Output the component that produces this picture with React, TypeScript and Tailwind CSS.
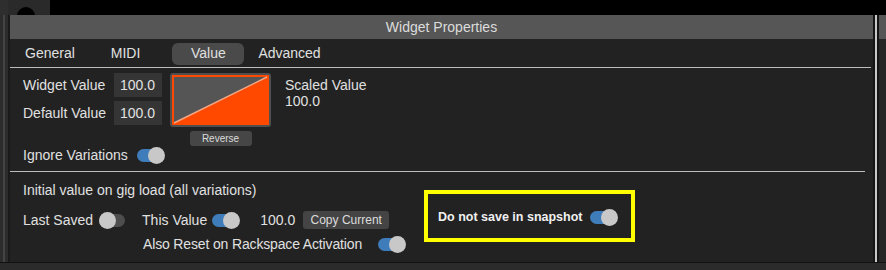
function Toggle({ on }: { on: boolean }) {
  return (
    <div className="relative w-[28px] h-[17px] flex items-center shrink-0">
      <div className={`w-[26px] h-[13px] rounded-full ${on ? 'bg-[#3f7dba]' : 'bg-[#4e4e4e]'}`}></div>
      <div className={`absolute top-0 ${on ? 'right-0' : 'left-0'} w-[17px] h-[17px] rounded-full bg-[#c8c8c8]`}></div>
    </div>
  )
}

function Field({ value }: { value: string }) {
  return (
    <div className="w-[48px] h-[24px] bg-[#353535] flex items-center pl-[6px] text-[#e2e2e2]">{value}</div>
  )
}

export default function App() {
  return (
    <div
      className="w-[886px] h-[270px] bg-black flex flex-col overflow-hidden text-[14px] text-[#e0e0e0] whitespace-nowrap"
      style={{ fontFamily: '"Liberation Sans", Arial, sans-serif' }}
    >
      {/* top strip */}
      <div className="h-[15px] flex shrink-0">
        <div className="w-[8px] bg-[#2e2e2e]"></div>
        <div className="w-[42px] bg-[#2a2a2a] flex justify-center pt-[7px] pr-[6px]">
          <div className="w-[18px] h-[18px] rounded-full bg-black"></div>
        </div>
        <div className="flex-1 bg-black"></div>
      </div>

      {/* middle */}
      <div className="h-[247px] flex shrink-0">
        <div className="w-[10px] bg-[#2c2c2c] flex">
          <div className="w-[3px]"></div>
          <div className="w-[2px] bg-[#444]"></div>
          <div className="w-[3px]"></div>
          <div className="w-[2px] bg-[#1a1a1a]"></div>
        </div>

        {/* panel */}
        <div className="w-[863px] flex flex-col bg-[#222222]">
          <div className="h-[24px] bg-[#565656] flex items-center justify-center text-[#dcdcdc] text-[14px]">
            Widget Properties
          </div>

          {/* tabs */}
          <div className="h-[28px] flex items-center pt-[1px]">
            <span className="ml-[15px]">General</span>
            <span className="ml-[36px]">MIDI</span>
            <div className="ml-[32px] w-[72px] h-[22px] rounded-md bg-[#4a4a4a] flex items-center justify-center">Value</div>
            <span className="ml-[14px]">Advanced</span>
          </div>
          <div className="h-[1px] w-[861px] bg-[#bdbdbd]"></div>

          {/* value section */}
          <div className="h-[103px] flex pt-[5px]">
            <div className="flex flex-col ml-[13px]">
              <div className="flex gap-[4px]">
                <div className="flex flex-col gap-[4px]">
                  <div className="flex items-center h-[24px] gap-[10px]">
                    <span className="w-[81px]">Widget Value</span>
                    <Field value="100.0" />
                  </div>
                  <div className="flex items-center h-[24px] gap-[10px]">
                    <span className="w-[81px]">Default Value</span>
                    <Field value="100.0" />
                  </div>
                </div>
                <div className="flex flex-col items-center ml-[4px]">
                  <div className="w-[101px] h-[54px] rounded-[3px] bg-[#4f4f4f] p-[2px]">
                    <svg width="97" height="50" viewBox="0 0 97 50" className="block">
                      <rect x="0" y="0" width="97" height="50" fill="#ff4800" />
                      <rect x="2" y="2" width="93" height="46" fill="#555555" />
                      <polygon points="2,48 95,2 95,48" fill="#ff4800" />
                      <line x1="2" y1="48" x2="95" y2="2" stroke="#f0a888" strokeWidth="1.4" />
                    </svg>
                  </div>
                  <div className="mt-[4px] w-[62px] h-[15px] rounded-[3px] bg-[#464646] text-[10px] text-[#dcdcdc] flex items-center justify-center">
                    Reverse
                  </div>
                </div>
                <div className="flex flex-col ml-[10px] leading-[16px] pt-[4px]">
                  <span>Scaled Value</span>
                  <span>100.0</span>
                </div>
              </div>
              <div className="flex items-center gap-[9px] -mt-[1px]">
                <span>Ignore Variations</span>
                <Toggle on={true} />
              </div>
            </div>
          </div>
          <div className="h-[1px] w-[855px] bg-[#bdbdbd]"></div>

          {/* initial value section */}
          <div className="flex-1 flex pl-[13px]">
            <div className="flex flex-col">
              <div className="mt-[10px] h-[16px] flex items-center">Initial value on gig load (all variations)</div>
              <div className="mt-[12px] flex items-center h-[20px]">
                <span>Last Saved</span>
                <div className="ml-[6px]"><Toggle on={false} /></div>
                <span className="ml-[15px]">This Value</span>
                <div className="ml-[5px]"><Toggle on={true} /></div>
                <span className="ml-[20px]">100.0</span>
                <div className="ml-[8px] w-[86px] h-[18px] rounded-[3px] bg-[#444] text-[12px] flex items-center justify-center text-[#dcdcdc]">
                  Copy Current
                </div>
              </div>
              <div className="mt-[4px] flex items-center h-[20px] pl-[120px]">
                <span className="tracking-[-0.15px]">Also Reset on Rackspace Activation</span>
                <div className="ml-[16px]"><Toggle on={true} /></div>
              </div>
            </div>
            <div className="ml-[18px] mt-[18px] w-[211px] h-[52px] border-[4px] border-[#ffff00] flex items-center pl-[10px] pt-[2px]">
              <span className="font-bold text-[12.5px] text-[#f0f0f0]">Do not save in snapshot</span>
              <div className="ml-[7px]"><Toggle on={true} /></div>
            </div>
          </div>
        </div>

        <div className="w-[2px] bg-[#151515]"></div>
        <div className="w-[2px] bg-[#c8c8c8]"></div>
        <div className="w-[2px] bg-[#151515]"></div>
        <div className="w-[7px] flex flex-col bg-[#262626]">
          <div className="h-[24px] bg-[#565656]"></div>
        </div>
      </div>

      {/* bottom strip */}
      <div className="flex-1 flex flex-col">
        <div className="h-[1px] bg-[#111]"></div>
        <div className="flex-1 bg-[#2b2b2b]"></div>
      </div>
    </div>
  )
}
